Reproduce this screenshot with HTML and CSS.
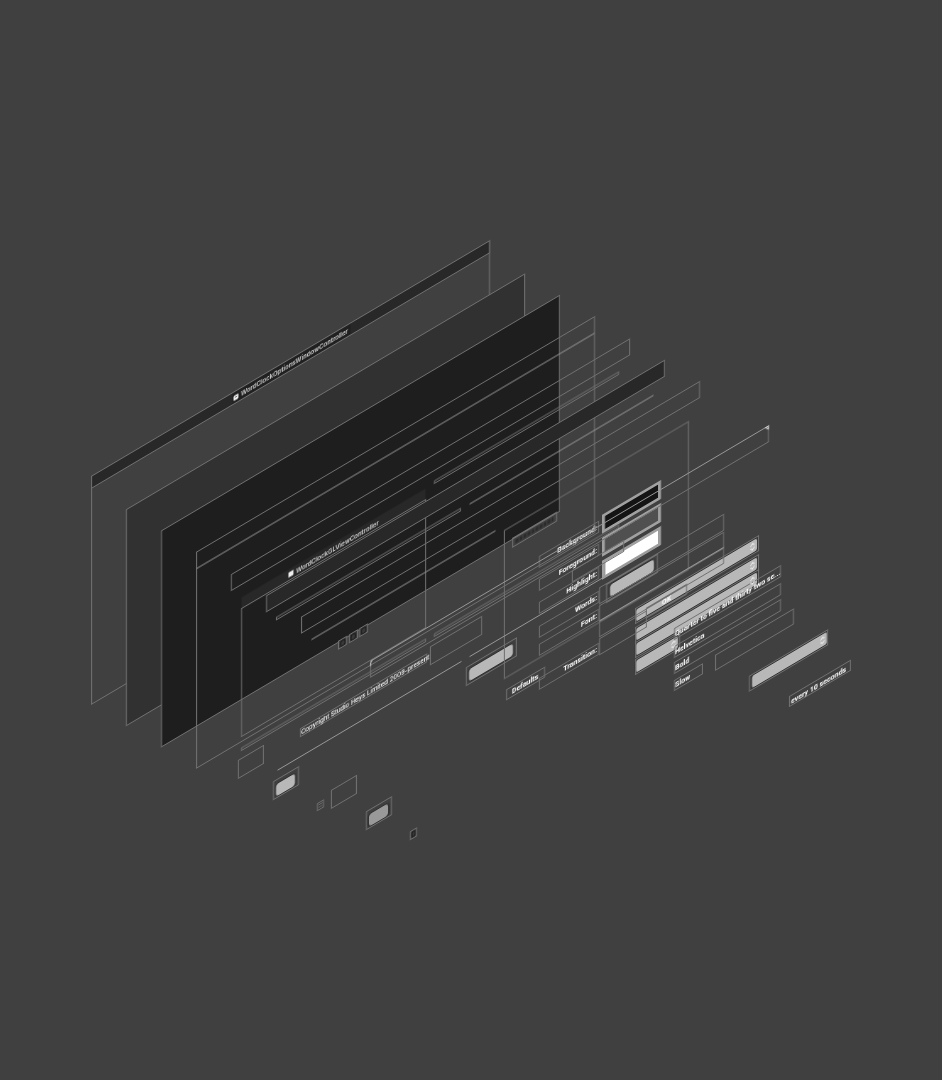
FILE: index.html
```html
<!DOCTYPE html>
<html lang="en">
<head>
    <meta charset="UTF-8">
    <title>WordClockOptionsWindowController</title>
    <link rel="stylesheet" href="styles.css">
</head>
<body>
<main class="stage">
    <div class="scene">
        <!-- form controls -->
        <label class="tag row1" for="background">Background:</label>
        <label class="tag row2" for="foreground">Foreground:</label>
        <label class="tag row3" for="highlight">Highlight:</label>
        <label class="tag row4" for="words">Words:</label>
        <label class="tag row5" for="font">Font:</label>
        <label class="tag row6" for="transition">Transition:</label>

        <input class="well well1" id="background" type="color" value="#141414">
        <input class="well well2" id="foreground" type="color" value="#505050">
        <input class="well well3" id="highlight" type="color" value="#ffffff">

        <select class="popup popup1" id="words"><option></option></select>
        <select class="popup popup2" id="font"><option></option></select>
        <select class="popup popup3" id="weight" aria-label="Bold"><option></option></select>
        <select class="popup popup4" id="transition"><option></option></select>
        <select class="popup popup5" id="interval" aria-label="every 10 seconds"><option></option></select>

        <button class="push defaults" type="button" aria-label="Defaults"></button>
        <button class="push ok" type="button" aria-label="OK"></button>
        <button class="push small1" type="button" aria-label="Previous"></button>
        <button class="push small2" type="button" aria-label="Next"></button>

        <!-- layers -->
        <svg class="layers" viewBox="91 293 760 900" aria-hidden="true">
            <g class="wire" transform="translate(.5 .5)">
                <rect x="91" y="529" width="398" height="228"/>
                <rect class="bar" x="91" y="529" width="398" height="12"/>
                <rect class="panel" x="126" y="583" width="398" height="216"/>
                <rect class="view" x="161" y="625" width="398" height="216"/>
                <rect x="196" y="667" width="398" height="216"/>
                <path class="light" d="M196 683.500h398"/>
                <rect x="231" y="710" width="398" height="16"/>
                <rect class="glbar" x="241" y="739" width="184" height="12"/>
                <rect x="241" y="750" width="184" height="128"/>
                <rect class="strip" x="266" y="752" width="398" height="16"/>
                <rect x="276" y="779.500" width="184" height="2.500"/>
                <rect x="434" y="736.500" width="184" height="2.500"/>
                <rect x="301" y="794" width="398" height="16"/>
                <path class="light" d="M311 822.500h184M469 780.500h184"/>
                <rect x="504" y="827.500" width="184" height="148"/>
                <rect x="370" y="879" width="398" height="16"/>
                <path class="light" d="M370 879h398"/>
                <path class="corner" d="M370 884v-3l2-2M765 879h3v3z"/>
                <rect x="241" y="889.500" width="184" height="2.500"/>
                <rect x="434" y="889.500" width="184" height="2.500"/>
                <path class="light" d="M277 933h184M469 933h184"/>

                <g class="box">
                    <rect x="338" y="840" width="8" height="8"/>
                    <rect x="349" y="840" width="8" height="8"/>
                    <rect x="359" y="840" width="8" height="8"/>
                    <rect x="317" y="990" width="6" height="7"/>
                    <rect x="410" y="1073" width="6" height="8"/>
                </g>
                <g class="ring">
                    <rect x="340" y="841.500" width="4.500" height="5.500" rx="2"/>
                    <rect x="350.500" y="841.500" width="4.500" height="5.500" rx="2"/>
                    <rect x="361" y="841.500" width="4.500" height="5.500" rx="2"/>
                    <rect x="411.500" y="1074.500" width="3" height="5" rx="1"/>
                </g>
                <path d="M318 992h4M318 994.500h4"/>

                <rect x="512" y="840" width="44" height="9"/>
                <path class="dim" d="M515 845h38"/>
                <rect x="430" y="900" width="51" height="18"/>
                <rect x="238" y="900" width="25" height="18"/>
                <rect x="331" y="985" width="25" height="18"/>
                <rect x="273" y="942" width="25" height="18"/>
                <rect x="366" y="1027" width="25" height="18"/>
                <rect x="466" y="942" width="50" height="18"/>
                <rect x="606" y="942" width="51" height="18"/>
                <rect x="300" y="905" width="126" height="8"/>
                <rect x="506" y="988" width="38" height="10"/>
                <rect x="572" y="908" width="51" height="11"/>
                <rect x="646" y="989" width="40" height="10"/>

                <rect x="599" y="941" width="124" height="16"/>
                <rect x="599" y="959" width="124" height="16"/>
                <rect x="599" y="974" width="124" height="16"/>
                <path class="light" d="M599 974h124"/>
                <rect x="599" y="992" width="47" height="16"/>

                <rect x="635" y="983" width="123" height="15"/>
                <rect x="635" y="1002" width="123" height="15"/>
                <rect x="635" y="1017" width="123" height="15"/>
                <rect x="635" y="1034" width="44" height="15"/>
                <rect x="749" y="1118" width="78" height="15"/>
                <rect x="715" y="1077" width="78" height="15"/>

                <rect x="674" y="1026" width="106" height="11"/>
                <rect x="674" y="1044" width="106" height="11"/>
                <rect x="674" y="1060" width="106" height="11"/>
                <rect x="674" y="1078" width="28" height="10"/>
                <rect x="789" y="1162" width="61" height="10"/>

                <g class="arrows">
                    <path d="M750 989.500l2-2 2 2M750 991.500l2 2 2-2"/>
                    <path d="M750 1008.500l2-2 2 2M750 1010.500l2 2 2-2"/>
                    <path d="M750 1023.500l2-2 2 2M750 1025.500l2 2 2-2"/>
                    <path d="M671 1040.500l2-2 2 2M671 1042.500l2 2 2-2"/>
                    <path d="M820 1124.500l2-2 2 2M820 1126.500l2 2 2-2"/>
                </g>

                <rect class="plate" x="232" y="530" width="118" height="10"/>
                <rect class="icon" x="233" y="533" width="5" height="5" rx="1"/>
                <path class="slot" d="M234.500 535h2"/>
                <rect class="icon" x="288" y="742" width="5" height="5"/>
            </g>
            <g class="words">
                <text class="title" x="241" y="538">WordClockOptionsWindowController</text>
                <text class="title" x="296" y="748">WordClockGLViewController</text>
                <text class="notice" x="301" y="912">Copyright Studio Heys Limited 2009-present</text>
                <text x="512" y="996">Defaults</text>
                <text x="662" y="996">OK</text>
                <text x="675" y="1035">Quarter to five and thirty two se...</text>
                <text x="675" y="1053">Helvetica</text>
                <text x="675" y="1069">Bold</text>
                <text x="675" y="1086">Slow</text>
                <text x="791" y="1171">every 10 seconds</text>
            </g>
        </svg>
    </div>
</main>
</body>
</html>
```
FILE: styles.css
```css
* { margin: 0; padding: 0; box-sizing: border-box; }
body { background: #404040; font-family: Roboto, "Liberation Sans", sans-serif; }
.stage { display: flex; align-items: center; justify-content: center; min-height: 100vh; overflow: hidden; }

/* everything inside the scene is laid out flat, then sheared */
.scene { position: relative; flex: none; width: 760px; height: 600px; transform: skewY(-30.6deg); transform-origin: 0 0; will-change: transform; }
.layers { position: absolute; left: 0; top: 0; width: 760px; height: 900px; pointer-events: none; }

.wire { fill: none; stroke: #707070; stroke-width: 1; }
.wire .bar { fill: #282828; }
.wire .panel { fill: #313131; }
.wire .view { fill: #1e1e1e; }
.wire .glbar { fill: #282828; stroke: none; }
.wire .strip { fill: #282828; }
.wire .plate { fill: #202020; stroke: none; }
.wire .icon { fill: #eee; stroke: none; }
.wire .slot { stroke: #555; }
.wire .light { stroke: #969696; }
.wire .corner { stroke: #ccc; }
.wire .dim { stroke: #2c2c2c; stroke-width: 4; stroke-dasharray: 3 1; }
.box { fill: #383838; }
.ring { stroke: #1c1c1c; fill: #383838; }
.arrows { stroke: #f0f0f0; }

.words { fill: #fff; font-size: 7px; font-weight: 700; }
.words .title { fill: #d4d4d4; font-family: Inter, sans-serif; font-size: 6px; font-weight: 600; }
.words .notice { font-family: Inter, sans-serif; font-size: 6px; font-weight: 500; }

.tag { position: absolute; left: 448px; width: 60px; height: 12px; border: 1px solid #6c6c6c; padding-right: 1px; color: #fff; font-size: 7px; font-weight: 700; line-height: 10px; text-align: right; }
.row1 { top: 581px; }
.row2 { top: 604px; }
.row3 { top: 627px; }
.row4 { top: 651px; }
.row5 { top: 669px; }
.row6 { top: 703px; }

.well { position: absolute; left: 511px; width: 59px; height: 19px; border: 3px solid #a0a0a0; background: none; appearance: none; }
.well::-webkit-color-swatch-wrapper { padding: 0; }
.well::-webkit-color-swatch { border: 0; border-radius: 0; }
.well1 { top: 577px; }
.well2 { top: 600px; }
.well3 { top: 623px; }

.popup, .push { position: absolute; border: 0; border-radius: 3px; background: #b8b8b8; box-shadow: 0 0 1px 1px #303030; appearance: none; }
.popup { left: 545px; width: 121px; height: 12px; border-radius: 2px; }
.popup1 { top: 692px; }
.popup2 { top: 711px; }
.popup3 { top: 726px; }
.popup4 { top: 743px; width: 42px; }
.popup5 { top: 827px; left: 661px; width: 75px; }
.push { height: 12px; }
.defaults { left: 378px; top: 653px; width: 44px; }
.ok { left: 519px; top: 652px; width: 44px; }
.small1 { left: 185px; top: 654px; width: 19px; }
.small2 { left: 278px; top: 739px; width: 19px; background: #999; }
```
